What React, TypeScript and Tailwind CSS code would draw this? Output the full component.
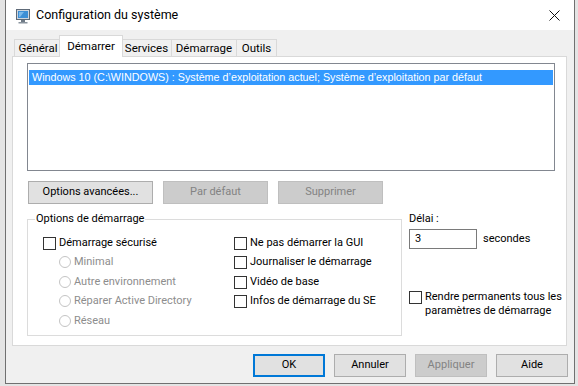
import type { ReactNode } from 'react';

const FONT = 'Roboto, "Noto Sans", sans-serif';

function MonitorIcon() {
  return (
    <svg width="16" height="16" viewBox="0 0 16 16">
      <rect x="1.5" y="1.5" width="13" height="10" fill="#cfd6de" stroke="#5e6a78" />
      <rect x="3" y="3" width="10" height="7" fill="#3d8fd6" />
      <path d="M4 4 L9 4 L5 9 L4 9 Z" fill="#8cc4f0" opacity="0.8" />
      <rect x="6" y="12" width="4" height="2" fill="#6f7a86" />
      <rect x="3.5" y="14" width="9" height="1.5" fill="#8a949e" />
    </svg>
  );
}

function Checkbox({ label, className = '' }: { label: ReactNode; className?: string }) {
  return (
    <div className={`flex items-start gap-[3px] ${className}`}>
      <div className="mt-[1px] h-[13px] w-[13px] shrink-0 border border-[#333333] bg-white" />
      <div className="whitespace-nowrap text-[11px] leading-[14px] text-black">{label}</div>
    </div>
  );
}

function Radio({ label }: { label: string }) {
  return (
    <div className="flex h-[19.5px] items-center gap-[3px] pl-[16px]">
      <div className="h-[12px] w-[12px] rounded-full border border-[#c4c4c4] bg-white" />
      <span className="text-[11px] leading-[14px] text-[#8d8d8d]">{label}</span>
    </div>
  );
}

function Button({ children, disabled, primary, className = '' }: { children: ReactNode; disabled?: boolean; primary?: boolean; className?: string }) {
  const look = disabled
    ? 'border border-[#bfbfbf] bg-[#cccccc] text-[#838383]'
    : primary
      ? 'border-2 border-[#0078d7] bg-[#e1e1e1] text-black'
      : 'border border-[#adadad] bg-[#e1e1e1] text-black';
  return (
    <div className={`flex h-[23px] shrink-0 items-center justify-center text-[11px] ${look} ${className}`}>
      {children}
    </div>
  );
}

const tabs = ['Général', 'Démarrer', 'Services', 'Démarrage', 'Outils'];
const tabWidths: Record<string, string> = {
  'Général': 'w-[47px]',
  'Démarrer': 'w-[64px]',
  'Services': 'w-[50px]',
  'Démarrage': 'w-[65px]',
  'Outils': 'w-[41px]',
};

export default function App() {
  return (
    <div className="h-[386px] w-[578px] overflow-hidden bg-[#e4e4e4]" style={{ fontFamily: FONT }}>
      <div className="ml-[5px] flex h-[384px] w-[570px] flex-col border-x border-b border-[#707070] bg-[#f0f0f0]">
        {/* title bar */}
        <div className="flex h-[30px] items-center bg-white">
          <div className="ml-[9px] mt-[1px]">
            <MonitorIcon />
          </div>
          <span className="ml-[5px] text-[12.5px] text-black">Configuration du système</span>
          <div className="ml-auto mr-[14px] flex h-[12px] w-[12px] items-center justify-center">
            <svg width="11" height="11" viewBox="0 0 11 11">
              <path d="M0.5 0.5 L10.5 10.5 M10.5 0.5 L0.5 10.5" stroke="#111" strokeWidth="1" />
            </svg>
          </div>
        </div>

        {/* tabs */}
        <div className="ml-[8px] mt-[6px] flex h-[20px] items-end">
          {tabs.map(tab => {
            const active = tab === 'Démarrer';
            return (
              <div
                key={tab}
                className={
                  active
                    ? `relative z-10 -mx-[2px] mb-[-1px] flex h-[22px] items-start justify-center border border-b-0 border-[#d9d9d9] bg-white pt-[2px] text-[11.5px] text-black ${tabWidths[tab]}`
                    : `flex h-[17px] items-center justify-center border border-b-0 border-r-0 border-[#d9d9d9] bg-[#f0f0f0] pt-[1px] text-[11.5px] text-black last:border-r ${tabWidths[tab]}`
                }
              >
                {tab}
              </div>
            );
          })}
        </div>

        {/* panel */}
        <div className="ml-[6px] flex h-[290px] w-[555px] flex-col border border-[#d9d9d9] bg-white">
          <div className="ml-[14px] mt-[6px] h-[108px] w-[528px] border border-[#828790] bg-white pt-[6px] pl-[1px]">
            <div
              className="flex h-[15px] w-[524px] items-center bg-[#3399ff] pl-[3px] text-[10.75px] text-white"
              style={{ fontFamily: '"Liberation Sans", Arial, sans-serif' }}
            >
              Windows 10 (C:\WINDOWS) : Système d’exploitation actuel; Système d’exploitation par défaut
            </div>
          </div>

          <div className="ml-[15px] mt-[10px] flex gap-[10px]">
            <Button className="w-[125px]">Options avancées...</Button>
            <Button disabled className="w-[105px]">Par défaut</Button>
            <Button disabled className="w-[105px]">Supprimer</Button>
          </div>

          <div className="ml-[14px] mt-[7px] flex">
            <fieldset className="h-[125px] w-[375px] shrink-0 border border-[#dcdcdc] px-[15px]">
              <legend className="ml-[-8px] px-[1px] text-[11px] leading-[16px] text-black">Options de démarrage</legend>
              <div className="mt-[6px] flex">
                <div className="w-[191px] shrink-0">
                  <div className="flex h-[19.5px] items-center">
                    <Checkbox label="Démarrage sécurisé" />
                  </div>
                  <Radio label="Minimal" />
                  <Radio label="Autre environnement" />
                  <Radio label="Réparer Active Directory" />
                  <Radio label="Réseau" />
                </div>
                <div>
                  {['Ne pas démarrer la GUI', 'Journaliser le démarrage', 'Vidéo de base', 'Infos de démarrage du SE'].map(item => (
                    <div key={item} className="flex h-[19.5px] items-center">
                      <Checkbox label={item} />
                    </div>
                  ))}
                </div>
              </div>
            </fieldset>

            <div className="ml-[7px] flex flex-col pt-[1px]">
              <span className="text-[11px] leading-[14px] text-black">Délai :</span>
              <div className="mt-[3px] flex items-center">
                <div className="flex h-[20px] w-[68px] items-center border border-[#7a7a7a] bg-white pl-[5px] text-[11px] text-black">3</div>
                <span className="ml-[6px] text-[11px] text-black">secondes</span>
              </div>
              <Checkbox
                className="mt-[41px]"
                label={<>Rendre permanents tous les<br />paramètres de démarrage</>}
              />
            </div>
          </div>
        </div>

        {/* footer */}
        <div className="mt-[8px] flex justify-end gap-[9px] pr-[6px]">
          <Button primary className="w-[72px]">OK</Button>
          <Button className="w-[72px]">Annuler</Button>
          <Button disabled className="w-[72px]">Appliquer</Button>
          <Button className="w-[72px]">Aide</Button>
        </div>
      </div>
    </div>
  );
}
